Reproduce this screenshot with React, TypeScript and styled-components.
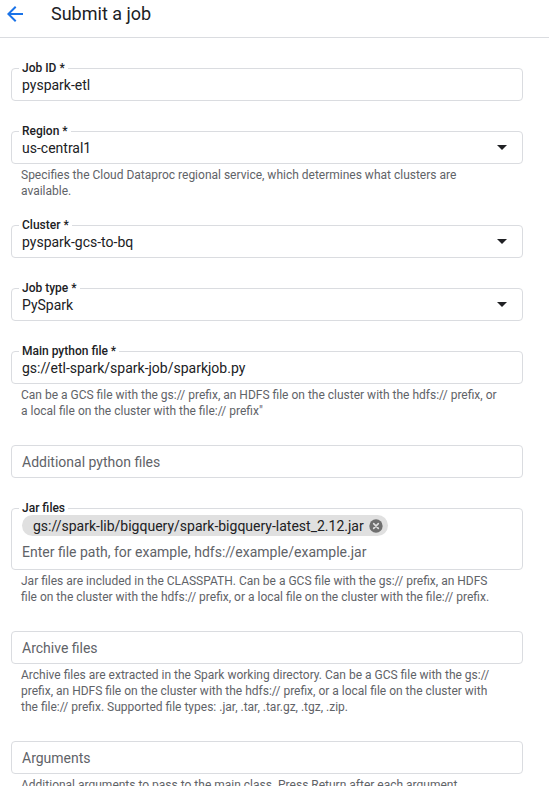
import React from 'react';
import styled, { createGlobalStyle } from 'styled-components';

const GlobalStyle = createGlobalStyle`
  html, body {
    margin: 0;
    padding: 0;
    background: #fff;
    font-family: Roboto, "Liberation Sans", Arial, sans-serif;
    color: #202124;
  }
  * {
    box-sizing: border-box;
  }
`;

const Page = styled.div`
  display: flex;
  flex-direction: column;
  width: 549px;
`;

const Header = styled.header`
  display: flex;
  align-items: center;
  height: 38px;
  padding: 0 0 10px 3px;
  border-bottom: 1px solid #dadce0;
`;

const BackButton = styled.button`
  display: flex;
  align-items: center;
  justify-content: center;
  width: 24px;
  height: 24px;
  padding: 0;
  margin: 0 24px 0 0;
  border: none;
  background: none;
  color: #1a73e8;
  cursor: pointer;
`;

const Title = styled.h1`
  margin: 0;
  font-size: 18px;
  font-weight: 400;
  color: #202124;
`;

const Form = styled.form`
  display: flex;
  flex-direction: column;
  gap: 26px;
  padding: 30px 0 0 11px;
  width: 523px;
`;

const Group = styled.div<{ $hasHelper: boolean }>`
  display: flex;
  flex-direction: column;
  padding-bottom: ${(p) => (p.$hasHelper ? '0' : '4px')};
`;

const FieldBox = styled.div<{ $tall?: boolean }>`
  position: relative;
  display: flex;
  flex-direction: ${(p) => (p.$tall ? 'column' : 'row')};
  align-items: ${(p) => (p.$tall ? 'flex-start' : 'center')};
  justify-content: ${(p) => (p.$tall ? 'flex-start' : 'space-between')};
  height: ${(p) => (p.$tall ? '62px' : '33px')};
  padding: ${(p) => (p.$tall ? '6px 10px 0 10px' : '0 15px 0 10px')};
  border: 1px solid #dadce0;
  border-radius: 4px;
  background: #fff;
`;

const Label = styled.label`
  position: absolute;
  top: -8px;
  left: 7px;
  padding: 0 3px;
  background: #fff;
  font-size: 12px;
  line-height: 14px;
  font-weight: 500;
  color: #202124;
`;

const Value = styled.span<{ $muted?: boolean }>`
  font-size: 14px;
  color: ${(p) => (p.$muted ? '#5f6368' : '#202124')};
`;

const Caret = styled.span`
  width: 0;
  height: 0;
  border-left: 5px solid transparent;
  border-right: 5px solid transparent;
  border-top: 5px solid #202124;
`;

const Chip = styled.span`
  display: inline-flex;
  align-items: center;
  gap: 4px;
  height: 21px;
  padding: 0 4px 0 11px;
  border-radius: 11px;
  background: #e0e0e0;
  font-size: 14px;
  color: #202124;
`;

const ChipInput = styled.span`
  margin-top: 8px;
  font-size: 14px;
  color: #5f6368;
`;

const Helper = styled.p`
  margin: 3px 0 0 10px;
  max-width: 484px;
  font-size: 12px;
  line-height: 16px;
  color: #5f6368;
`;

type Field = {
  label?: string;
  value: string;
  muted?: boolean;
  select?: boolean;
  helper?: string;
};

const fields: Field[] = [
  { label: 'Job ID *', value: 'pyspark-etl' },
  {
    label: 'Region *',
    value: 'us-central1',
    select: true,
    helper: 'Specifies the Cloud Dataproc regional service, which determines what clusters are available.',
  },
  { label: 'Cluster *', value: 'pyspark-gcs-to-bq', select: true },
  { label: 'Job type *', value: 'PySpark', select: true },
  {
    label: 'Main python file *',
    value: 'gs://etl-spark/spark-job/sparkjob.py',
    helper:
      'Can be a GCS file with the gs:// prefix, an HDFS file on the cluster with the hdfs:// prefix, or a local file on the cluster with the file:// prefix"',
  },
  { value: 'Additional python files', muted: true },
];

const laterFields: Field[] = [
  {
    value: 'Archive files',
    muted: true,
    helper:
      'Archive files are extracted in the Spark working directory. Can be a GCS file with the gs:// prefix, an HDFS file on the cluster with the hdfs:// prefix, or a local file on the cluster with the file:// prefix. Supported file types: .jar, .tar, .tar.gz, .tgz, .zip.',
  },
  {
    value: 'Arguments',
    muted: true,
    helper: 'Additional arguments to pass to the main class. Press Return after each argument.',
  },
];

function BackArrow() {
  return (
    <svg width="24" height="24" viewBox="0 0 24 24" fill="currentColor">
      <path d="M20 11H7.83l5.59-5.59L12 4l-8 8 8 8 1.41-1.41L7.83 13H20v-2z" />
    </svg>
  );
}

function CancelIcon() {
  return (
    <svg width="16" height="16" viewBox="0 0 24 24">
      <circle cx="12" cy="12" r="10" fill="#6f6f6f" />
      <path d="M8.5 8.5l7 7M15.5 8.5l-7 7" stroke="#e0e0e0" strokeWidth="2.4" strokeLinecap="round" />
    </svg>
  );
}

function TextField({ label, value, muted, select, helper }: Field) {
  return (
    <Group $hasHelper={!!helper}>
      <FieldBox>
        {label && <Label>{label}</Label>}
        <Value $muted={muted}>{value}</Value>
        {select && <Caret />}
      </FieldBox>
      {helper && <Helper>{helper}</Helper>}
    </Group>
  );
}

export default function App() {
  return (
    <Page>
      <GlobalStyle />
      <Header>
        <BackButton type="button" aria-label="Back">
          <BackArrow />
        </BackButton>
        <Title>Submit a job</Title>
      </Header>
      <Form>
        {fields.map((f) => (
          <TextField key={f.value} {...f} />
        ))}
        <Group $hasHelper>
          <FieldBox $tall>
            <Label>Jar files</Label>
            <Chip>
              gs://spark-lib/bigquery/spark-bigquery-latest_2.12.jar
              <CancelIcon />
            </Chip>
            <ChipInput>Enter file path, for example, hdfs://example/example.jar</ChipInput>
          </FieldBox>
          <Helper>
            Jar files are included in the CLASSPATH. Can be a GCS file with the gs:// prefix, an HDFS file on the
            cluster with the hdfs:// prefix, or a local file on the cluster with the file:// prefix.
          </Helper>
        </Group>
        {laterFields.map((f) => (
          <TextField key={f.value} {...f} />
        ))}
      </Form>
    </Page>
  );
}
